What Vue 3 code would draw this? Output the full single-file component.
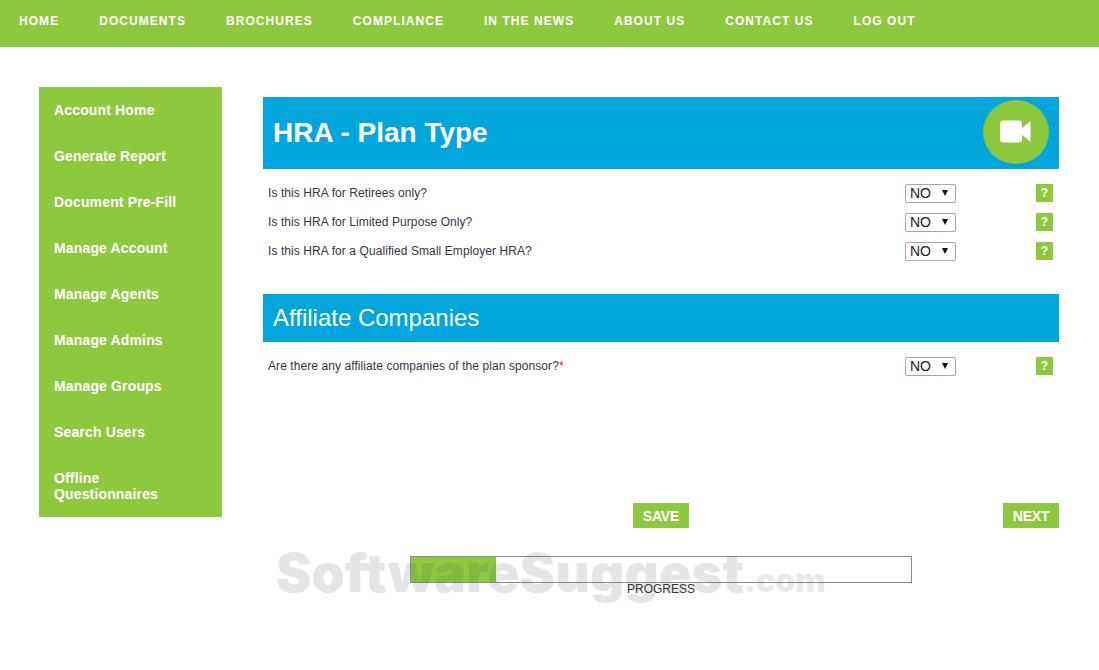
<script setup>
const navItems = ['HOME', 'DOCUMENTS', 'BROCHURES', 'COMPLIANCE', 'IN THE NEWS', 'ABOUT US', 'CONTACT US', 'LOG OUT'];

const sideItems = [
  'Account Home',
  'Generate Report',
  'Document Pre-Fill',
  'Manage Account',
  'Manage Agents',
  'Manage Admins',
  'Manage Groups',
  'Search Users',
  'Offline Questionnaires',
];

const planQuestions = [
  'Is this HRA for Retirees only?',
  'Is this HRA for Limited Purpose Only?',
  'Is this HRA for a Qualified Small Employer HRA?',
];
</script>

<template>
  <div class="page">
    <nav class="topnav">
      <a v-for="item in navItems" :key="item" class="topnav-link">{{ item }}</a>
    </nav>

    <div class="content">
      <aside class="sidebar">
        <a v-for="item in sideItems" :key="item" class="side-link">{{ item }}</a>
      </aside>

      <main class="main">
        <header class="banner">
          <h1>HRA - Plan Type</h1>
          <div class="video-btn">
            <svg width="32" height="24" viewBox="0 0 32 24">
              <rect x="0" y="0.5" width="22" height="22" rx="3.5" fill="#fff" />
              <path d="M21 9 L30.5 1 V22 L21 14 Z" fill="#fff" />
            </svg>
          </div>
        </header>

        <div class="questions">
          <div v-for="q in planQuestions" :key="q" class="row">
            <span class="question">{{ q }}</span>
            <div class="select-box"><span>NO</span><i class="caret"></i></div>
            <span class="help">?</span>
          </div>
        </div>

        <h2 class="subbanner">Affiliate Companies</h2>

        <div class="questions">
          <div class="row">
            <span class="question">Are there any affiliate companies of the plan sponsor?<em>*</em></span>
            <div class="select-box"><span>NO</span><i class="caret"></i></div>
            <span class="help">?</span>
          </div>
        </div>

        <div class="actions">
          <button class="btn">SAVE</button>
          <button class="btn">NEXT</button>
        </div>

        <div class="progress-wrap">
          <div class="progress"><div class="progress-fill" :style="{ width: '17%' }"></div></div>
          <div class="progress-label">PROGRESS</div>
        </div>
      </main>
    </div>

    <div class="watermark">SoftwareSuggest<small>.com</small></div>
  </div>
</template>

<style>
html, body {
  margin: 0;
  background: #fff;
}
</style>

<style scoped>
.page {
  position: relative;
  width: 1099px;
  height: 670px;
  overflow: hidden;
  font-family: "Liberation Sans", Arial, sans-serif;
}

.topnav {
  height: 47px;
  background: #8dc93f;
  display: flex;
  gap: 40px;
  padding: 0 19px;
  box-sizing: border-box;
  align-items: flex-start;
}
.topnav-link {
  color: #fff;
  font-size: 12px;
  font-weight: 700;
  letter-spacing: 1.05px;
  line-height: 42px;
  white-space: nowrap;
}

.content {
  display: flex;
  padding: 40px 40px 0 39px;
  gap: 41px;
}

.sidebar {
  width: 183px;
  height: 430px;
  flex-shrink: 0;
  background: #8dc93f;
  box-sizing: border-box;
  padding: 15px 30px 0 15px;
  display: flex;
  flex-direction: column;
  gap: 30px;
}
.side-link {
  color: #fff;
  font-size: 14px;
  font-weight: 700;
  line-height: 16px;
  letter-spacing: 0.15px;
}

.main {
  flex: 1;
  padding-top: 10px;
  min-width: 0;
}

.banner {
  height: 72px;
  background: #00a6dc;
  display: flex;
  align-items: center;
  justify-content: space-between;
  padding: 0 10px;
}
.banner h1 {
  margin: 0;
  color: #fff;
  font-size: 28px;
  font-weight: 700;
}
.video-btn {
  width: 66px;
  height: 64px;
  margin-bottom: 2px;
  border-radius: 50%;
  background: #8dc93f;
  display: flex;
  align-items: center;
  justify-content: center;
}

.questions {
  padding-top: 9px;
  display: flex;
  flex-direction: column;
  gap: 10px;
}
.row {
  display: flex;
  align-items: center;
  height: 19px;
  padding: 5px 6px 0 5px;
  margin-bottom: -5px;
}
.question {
  flex: 1;
  font-size: 12px;
  letter-spacing: 0.08px;
  color: #3a3340;
}
.question em {
  color: #e0202e;
  font-style: normal;
}

.select-box {
  width: 51px;
  height: 19px;
  margin-top: 2px;
  box-sizing: border-box;
  border: 1px solid #a6a6a6;
  border-radius: 2px;
  display: flex;
  align-items: center;
  justify-content: space-between;
  padding: 0 7px 2px 4px;
  font-size: 14px;
  color: #222;
  margin-right: 80px;
}
.caret {
  width: 0;
  height: 0;
  border-left: 3.5px solid transparent;
  border-right: 3.5px solid transparent;
  border-top: 6px solid #111;
}
.help {
  width: 17px;
  height: 18px;
  margin-top: 1px;
  background: #8dc93f;
  color: #fff;
  font-size: 12px;
  font-weight: 700;
  line-height: 18px;
  text-align: center;
}

.subbanner {
  margin: 39px 0 0;
  height: 48px;
  line-height: 48px;
  background: #00a6dc;
  color: #fff;
  font-size: 24px;
  font-weight: 400;
  padding-left: 10px;
}

.actions {
  display: flex;
  justify-content: flex-end;
  gap: 314px;
  margin-top: 133px;
}
.btn {
  height: 25px;
  width: 56px;
  padding: 0;
  border: 0;
  background: #8dc93f;
  color: #fff;
  font-family: inherit;
  font-size: 14px;
  letter-spacing: -0.2px;
  font-weight: 700;
}

.progress-wrap {
  width: 502px;
  margin: 28px 0 0 147px;
}
.progress {
  height: 27px;
  box-sizing: border-box;
  border: 1px solid #8c8c8c;
  background: #fff;
}
.progress-fill {
  height: 100%;
  background: #8dc93f;
}
.progress-label {
  text-align: center;
  font-size: 12px;
  line-height: 12px;
  color: #333;
}

.watermark {
  position: absolute;
  left: 276px;
  top: 539px;
  font-family: Inter, "Liberation Sans", sans-serif;
  font-weight: 900;
  font-size: 53px;
  line-height: 68px;
  letter-spacing: 0.2px;
  color: rgba(80, 80, 80, 0.15);
  white-space: nowrap;
  pointer-events: none;
}
.watermark small {
  font-size: 32px;
  letter-spacing: 0;
}
</style>
